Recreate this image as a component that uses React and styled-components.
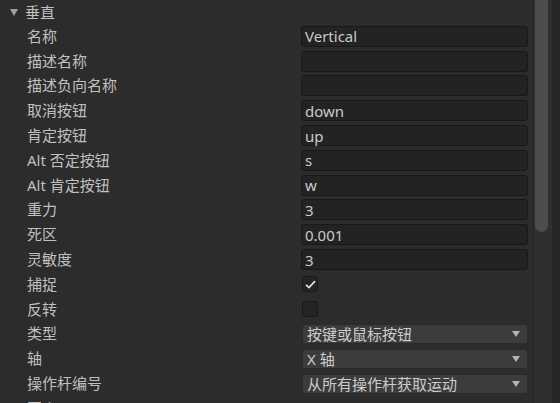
import React from "react";
import styled, { createGlobalStyle } from "styled-components";

const GlobalStyle = createGlobalStyle`
  html, body {
    margin: 0;
    padding: 0;
    background: #2c2c2c;
  }
  * {
    box-sizing: border-box;
  }
`;

const Page = styled.div`
  display: flex;
  width: 560px;
  height: 403px;
  overflow: hidden;
  background: #2c2c2c;
  font-family: "Noto Sans", "Noto Sans CJK SC", sans-serif;
  font-size: 15px;
  color: #c0c0c0;
`;

const Content = styled.div`
  flex: 1;
  display: flex;
  flex-direction: column;
`;

const Header = styled.div`
  flex-shrink: 0;
  display: flex;
  align-items: center;
  height: 24px;
  padding-left: 10px;
  gap: 7px;
`;

const Arrow = styled.span`
  width: 0;
  height: 0;
  border-left: 4px solid transparent;
  border-right: 4px solid transparent;
  border-top: 7px solid #a0a0a0;
  transform: ${(p) => (p.$open ? "none" : "rotate(-90deg)")};
`;

const Row = styled.div`
  flex-shrink: 0;
  display: grid;
  grid-template-columns: 274px 227px;
  align-items: center;
  height: 24.8px;
  padding-left: 27px;
`;

const Label = styled.span`
  white-space: nowrap;
  line-height: 1;
`;

const TextField = styled.div`
  height: 21px;
  display: flex;
  align-items: center;
  padding: 0 3px 0 3px;
  background: #232323;
  border: 1px solid #181818;
  border-radius: 3px;
  color: #cacaca;
  white-space: nowrap;
`;

const Check = styled.div`
  width: 16px;
  height: 16px;
  display: flex;
  align-items: center;
  justify-content: center;
  margin-left: 1px;
  background: #242424;
  border: 1px solid #191919;
  border-radius: 3px;
`;

const Dropdown = styled.div`
  height: 20px;
  margin-left: 1px;
  display: flex;
  align-items: center;
  justify-content: space-between;
  padding: 0 7px 0 4px;
  background: #3c3c3c;
  border: 1px solid #2a2a2a;
  border-radius: 3px;
  color: #cccccc;
  white-space: nowrap;
`;

const DropArrow = styled.span`
  width: 0;
  height: 0;
  border-left: 4px solid transparent;
  border-right: 4px solid transparent;
  border-top: 6px solid #b4b4b4;
`;

const Track = styled.div`
  width: 19px;
  height: 100%;
  background: #2f2f2f;
  border-left: 1px solid #262626;
  padding-left: 1px;
`;

const Thumb = styled.div`
  width: 13px;
  height: 232px;
  background: #4c4c4c;
  border-radius: 0 0 7px 7px;
`;

const Edge = styled.div`
  width: 8px;
  height: 100%;
  background: #262626;
`;

const rows = [
  { label: "名称", kind: "text", value: "Vertical" },
  { label: "描述名称", kind: "text", value: "" },
  { label: "描述负向名称", kind: "text", value: "" },
  { label: "取消按钮", kind: "text", value: "down" },
  { label: "肯定按钮", kind: "text", value: "up" },
  { label: "Alt 否定按钮", kind: "text", value: "s" },
  { label: "Alt 肯定按钮", kind: "text", value: "w" },
  { label: "重力", kind: "text", value: "3" },
  { label: "死区", kind: "text", value: "0.001" },
  { label: "灵敏度", kind: "text", value: "3" },
  { label: "捕捉", kind: "check", value: true },
  { label: "反转", kind: "check", value: false },
  { label: "类型", kind: "select", value: "按键或鼠标按钮" },
  { label: "轴", kind: "select", value: "X 轴" },
  { label: "操作杆编号", kind: "select", value: "从所有操作杆获取运动" },
];

const Field = ({ kind, value }) => {
  if (kind === "check") {
    return (
      <Check>
        {value && (
          <svg width="11" height="9" viewBox="0 0 11 9">
            <path d="M1 4.8 L4 7.6 L10 1.2" fill="none" stroke="#e0e0e0" strokeWidth="1.8" />
          </svg>
        )}
      </Check>
    );
  }
  if (kind === "select") {
    return (
      <Dropdown>
        <span>{value}</span>
        <DropArrow />
      </Dropdown>
    );
  }
  return <TextField>{value}</TextField>;
};

export default function App() {
  return (
    <>
      <GlobalStyle />
      <Page>
        <Content>
          <Header>
            <Arrow $open />
            <Label>垂直</Label>
          </Header>
          {rows.map((r) => (
            <Row key={r.label}>
              <Label>{r.label}</Label>
              <Field kind={r.kind} value={r.value} />
            </Row>
          ))}
          <Row>
            <Label>开火1</Label>
          </Row>
        </Content>
        <Track>
          <Thumb />
        </Track>
        <Edge />
      </Page>
    </>
  );
}
